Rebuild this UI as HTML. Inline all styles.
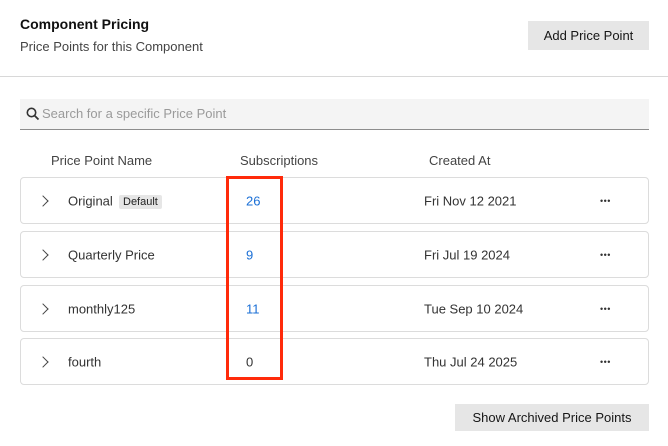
<!DOCTYPE html>
<html><head><style>
*{box-sizing:border-box;margin:0;padding:0}
body{width:668px;height:446px;background:#fff;font-family:"Liberation Sans",sans-serif;color:#333;position:relative;overflow:hidden;font-size:13px}
.a{position:absolute;white-space:nowrap}
.btn{position:absolute;background:#e6e6e6;color:#161616;font-size:13px;display:flex;align-items:center;justify-content:center}
.row{position:absolute;left:20px;width:629px;border:1px solid #dcdcdc;border-radius:4px;height:47px}
.row span{position:absolute;top:50%;transform:translateY(-50%);white-space:nowrap}
.blue{color:#1a6fd6}
.chev{left:18px;width:8px;height:8px;border-right:1.3px solid #444;border-top:1.3px solid #444;transform:translateY(-50%) rotate(45deg)!important}
.dots{left:579px;font-size:9px;letter-spacing:0.5px;color:#333}
</style></head><body>
<div class="a" style="left:20px;top:16px;font-weight:bold;font-size:14px;color:#111">Component Pricing</div>
<div class="a" style="left:20px;top:39px;font-size:13px;color:#444">Price Points for this Component</div>
<div class="btn" style="left:528px;top:21px;width:121px;height:29px">Add Price Point</div>
<div class="a" style="left:0;top:76px;width:668px;height:1px;background:#d8d8d8"></div>
<div class="a" style="left:20px;top:99px;width:629px;height:31px;background:#f4f4f4;border-bottom:1px solid #8d8d8d"></div>
<svg class="a" style="left:26px;top:107px" width="14" height="14" viewBox="0 0 14 14"><circle cx="5.5" cy="5.5" r="4.2" fill="none" stroke="#333" stroke-width="1.6"/><line x1="8.5" y1="8.5" x2="12.5" y2="12.5" stroke="#333" stroke-width="1.8"/></svg>
<div class="a" style="left:42px;top:106px;color:#9a9a9a">Search for a specific Price Point</div>
<div class="a" style="left:51px;top:153px;color:#444">Price Point Name</div>
<div class="a" style="left:240px;top:153px;color:#444">Subscriptions</div>
<div class="a" style="left:429px;top:153px;color:#444">Created At</div>
<div class="row" style="top:177px"><span class="chev"></span><span style="left:47px">Original</span><span style="left:98px;background:#e6e6e6;font-size:11px;padding:1px 4px;border-radius:2px;color:#222;margin-top:1px">Default</span><span class="blue" style="left:225px">26</span><span style="left:403px">Fri Nov 12 2021</span><span class="dots">•••</span></div>
<div class="row" style="top:231px"><span class="chev"></span><span style="left:47px">Quarterly Price</span><span class="blue" style="left:225px">9</span><span style="left:403px">Fri Jul 19 2024</span><span class="dots">•••</span></div>
<div class="row" style="top:285px"><span class="chev"></span><span style="left:47px">monthly125</span><span class="blue" style="left:225px">11</span><span style="left:403px">Tue Sep 10 2024</span><span class="dots">•••</span></div>
<div class="row" style="top:338px"><span class="chev"></span><span style="left:47px">fourth</span><span style="left:225px">0</span><span style="left:403px">Thu Jul 24 2025</span><span class="dots">•••</span></div>
<div class="a" style="left:226px;top:176px;width:57px;height:204px;border:3.5px solid #ff2a0a"></div>
<div class="btn" style="left:455px;top:404px;width:194px;height:27px">Show Archived Price Points</div>
</body></html>
